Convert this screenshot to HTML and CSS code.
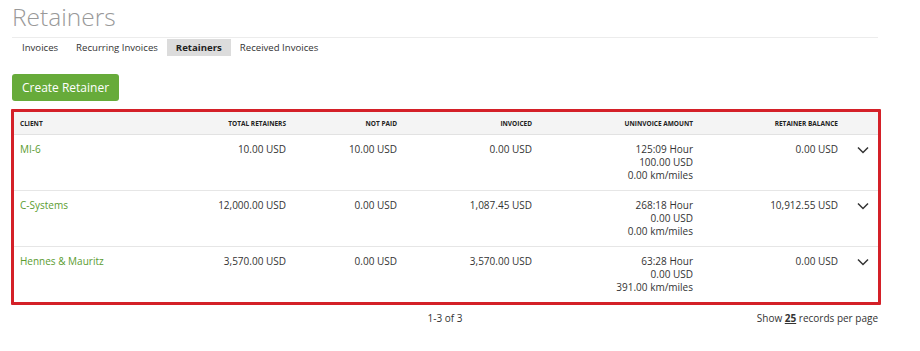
FILE: index.html
```html
<!DOCTYPE html>
<html>
<head>
<meta charset="utf-8">
<link rel="stylesheet" href="styles.css">
</head>
<body>
<div class="page">
  <h1 class="title">Retainers</h1>
  <nav class="tabs">
    <span class="tab">Invoices</span>
    <span class="tab">Recurring Invoices</span>
    <span class="tab active">Retainers</span>
    <span class="tab">Received Invoices</span>
  </nav>
  <button class="btn">Create Retainer</button>
  <div class="table">
    <div class="row head">
      <div class="cell left">CLIENT</div>
      <div class="cell">TOTAL RETAINERS</div>
      <div class="cell">NOT PAID</div>
      <div class="cell">INVOICED</div>
      <div class="cell">UNINVOICE AMOUNT</div>
      <div class="cell">RETAINER BALANCE</div>
      <div class="cell"></div>
    </div>
    <div class="row">
      <div class="cell left link">MI-6</div>
      <div class="cell">10.00 USD</div>
      <div class="cell">10.00 USD</div>
      <div class="cell">0.00 USD</div>
      <div class="cell">125:09 Hour<br>100.00 USD<br>0.00 km/miles</div>
      <div class="cell">0.00 USD</div>
      <div class="cell chev"><svg width="12" height="8" viewBox="0 0 12 8"><polyline points="1,1.5 6,6.5 11,1.5" fill="none" stroke="#333" stroke-width="1.5"/></svg></div>
    </div>
    <div class="row">
      <div class="cell left link">C-Systems</div>
      <div class="cell">12,000.00 USD</div>
      <div class="cell">0.00 USD</div>
      <div class="cell">1,087.45 USD</div>
      <div class="cell">268:18 Hour<br>0.00 USD<br>0.00 km/miles</div>
      <div class="cell">10,912.55 USD</div>
      <div class="cell chev"><svg width="12" height="8" viewBox="0 0 12 8"><polyline points="1,1.5 6,6.5 11,1.5" fill="none" stroke="#333" stroke-width="1.5"/></svg></div>
    </div>
    <div class="row last">
      <div class="cell left link">Hennes &amp; Mauritz</div>
      <div class="cell">3,570.00 USD</div>
      <div class="cell">0.00 USD</div>
      <div class="cell">3,570.00 USD</div>
      <div class="cell">63:28 Hour<br>0.00 USD<br>391.00 km/miles</div>
      <div class="cell">0.00 USD</div>
      <div class="cell chev"><svg width="12" height="8" viewBox="0 0 12 8"><polyline points="1,1.5 6,6.5 11,1.5" fill="none" stroke="#333" stroke-width="1.5"/></svg></div>
    </div>
  </div>
  <div class="pager">
    <div class="pager-side"></div>
    <div class="pager-count">1-3 of 3</div>
    <div class="pager-side right">Show <b class="num">25</b> records per page</div>
  </div>
</div>
</body>
</html>
```
FILE: styles.css
```css
* { box-sizing: border-box; }
body {
  margin: 0;
  background: #fff;
  font-family: "Open Sans", "Liberation Sans", sans-serif;
  color: #333;
}
.page {
  width: 881px;
  padding: 0 0 0 11px;
}
.title {
  margin: 0 0 0 1px;
  width: 866px;
  font-size: 24.5px;
  font-weight: 300;
  line-height: 33px;
  color: #999;
  padding-bottom: 4px;
  border-bottom: 1px solid #ececec;
}
.tabs {
  display: flex;
  margin: 1px 0 0 2px;
  height: 17px;
}
.tab {
  font-size: 9.6px;
  line-height: 17px;
  padding: 0 9px;
  color: #333;
}
.tab.active {
  background: #dcdcdc;
  font-weight: 700;
  color: #222;
}
.btn {
  display: block;
  margin: 18px 0 0 1px;
  width: 107px;
  height: 27px;
  border: none;
  border-radius: 3px;
  background: #67ab3a;
  color: #fff;
  font-family: "Open Sans", "Liberation Sans", sans-serif;
  font-size: 12px;
  padding: 0;
}
.table {
  margin-top: 8px;
  width: 870px;
  border: 3px solid #d42028;
  border-radius: 1px;
}
.row {
  display: grid;
  grid-template-columns: 186px 94px 111px 135px 161px 145px 32px;
  border-bottom: 1px solid #e6e6e6;
  height: 56px;
}
.row.last { border-bottom: none; height: 55px; }
.row.head {
  height: 23px;
  background: #f4f4f4;
  border-bottom: 1px solid #e2e2e2;
}
.cell {
  padding: 8px 8px 0 0;
  text-align: right;
  font-size: 10px;
  line-height: 13px;
  color: #333;
}
.cell.left { text-align: left; padding-left: 6px; }
.head .cell {
  font-size: 6.5px;
  font-weight: 700;
  line-height: 23px;
  padding-top: 0;
  color: #222;
}
.link { color: #5b9c2f; }
.chev {
  padding: 11px 0 0 11px;
  text-align: left;
}
.chev svg { display: block; }
.pager {
  display: flex;
  width: 866px;
  margin-left: 1px;
  margin-top: 6px;
  font-size: 10px;
  line-height: 14px;
}
.pager-side { flex: 1; }
.pager-side.right { text-align: right; }
.pager-count { text-align: center; }
.num { text-decoration: underline; }
```
